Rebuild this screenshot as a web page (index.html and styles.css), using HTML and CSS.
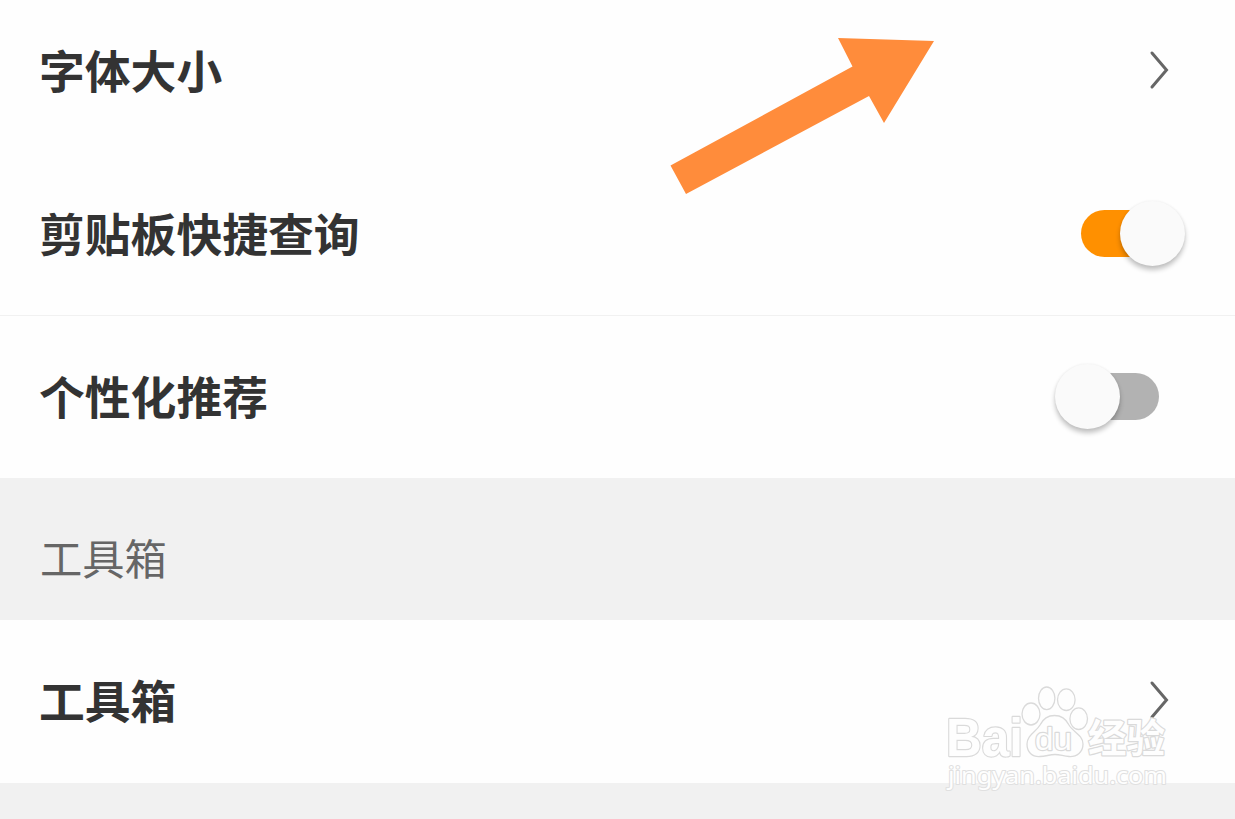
FILE: index.html
```html
<!DOCTYPE html>
<html lang="zh-CN">
    <head>
        <meta charset="utf-8" />
        <title>设置</title>
        <link rel="stylesheet" href="styles.css">
    </head>
    <body>
        <div class="settings">
            <div class="row row_first">
                <span class="label">字体大小</span>
                <svg class="chevron" viewBox="0 0 20 40"><path d="M3 3 L17.5 20 L3 37" /></svg>
            </div>
            <div class="row row_line">
                <span class="label">剪贴板快捷查询</span>
                <div class="toggle on"><div class="thumb"></div></div>
            </div>
            <div class="row">
                <span class="label">个性化推荐</span>
                <div class="toggle"><div class="thumb"></div></div>
            </div>
            <div class="section">工具箱</div>
            <div class="row row_last">
                <span class="label">工具箱</span>
                <svg class="chevron" viewBox="0 0 20 40"><path d="M3 3 L17.5 20 L3 37" /></svg>
            </div>
        </div>

        <svg class="arrow" viewBox="670 37 265 158">
            <path d="M670.5 165.5 L852.5 66.5 L838 38 L934 41 L884 123 L869 96 L686 194 Z" />
        </svg>

        <svg class="watermark" viewBox="940 680 235 115">
            <text class="logo_latin" x="946" y="756" textLength="77" lengthAdjust="spacingAndGlyphs">Bai</text>
            <ellipse cx="1031" cy="714" rx="9" ry="11" />
            <ellipse cx="1046.7" cy="698.3" rx="8.2" ry="11.3" />
            <ellipse cx="1066.3" cy="699.7" rx="8.8" ry="10.8" />
            <ellipse cx="1078.7" cy="718.7" rx="8.8" ry="10.8" />
            <path d="M1054.5 715.5 C1061 715.5 1066 719 1069 725 C1073 732 1083 735 1083 744 C1083 752 1077 757 1069 756.5 C1063 756 1060 754.5 1055 754.5 C1049 754.5 1046 756.5 1040 756.5 C1032 757 1027 752 1027 744 C1027 735 1036 732 1040 725 C1043 719 1048 715.5 1054.5 715.5 Z" />
            <text class="logo_du" x="1035" y="750" textLength="37" lengthAdjust="spacingAndGlyphs">du</text>
            <text class="logo_cn" x="1088" y="752" textLength="77" lengthAdjust="spacingAndGlyphs">经验</text>
            <text class="logo_url" x="948" y="784" textLength="219" lengthAdjust="spacingAndGlyphs">jingyan.baidu.com</text>
        </svg>
    </body>
</html>
```

FILE: styles.css
```css
html, body {
    width: 100%;
    height: 100%;
}

body {
    margin: 0;
    position: relative;
    overflow: hidden;
    background-color: #f1f1f1;
    font-family: "Noto Sans CJK SC", sans-serif;
}

.row {
    display: flex;
    align-items: center;
    justify-content: space-between;
    box-sizing: border-box;
    height: 162px;
    padding: 0px 66px 2px 39px;
    background-color: #fefefe;
}

/* the list is scrolled, the first row is cut at the top */
.row_first {
    height: 153px;
    padding-bottom: 14px;
}

.row_line {
    height: 163px;
    border-bottom: 1px solid #f1f1f1;
}

.row_last {
    height: 163px;
    padding-bottom: 3px;
}

.label {
    margin-bottom: 2px;
    font-size: 45.8px;
    font-weight: bold;
    line-height: 60px;
    color: #333;
}

.section {
    display: flex;
    align-items: center;
    box-sizing: border-box;
    height: 142px;
    padding: 16px 40px 0px;
    font-size: 42.3px;
    line-height: 60px;
    color: #666;
}

.chevron {
    width: 20px;
    height: 40px;
}

.chevron path {
    fill: none;
    stroke: #666;
    stroke-width: 3;
    stroke-linecap: round;
}

.toggle {
    display: flex;
    align-items: center;
    width: 78px;
    height: 47px;
    margin-right: 10px;
    border-radius: 24px;
    background-color: #b2b2b2;
}

.toggle.on {
    justify-content: flex-end;
    background-color: #ff9000;
}

.thumb {
    flex: none;
    width: 65px;
    height: 65px;
    margin: 0px -26px;
    border-radius: 50%;
    background-color: #fafafa;
    box-shadow: 0px 4px 5px rgba(0, 0, 0, 0.24), 0px 0px 3px rgba(0, 0, 0, 0.06);
}

.arrow {
    position: absolute;
    left: 670px;
    top: 37px;
    width: 265px;
    height: 158px;
    fill: #ff8c3b;
}

.watermark {
    position: absolute;
    left: 940px;
    top: 680px;
    width: 235px;
    height: 115px;
    fill: #fefefe;
    stroke: #dadada;
    stroke-width: 1.3;
}

.watermark text {
    paint-order: stroke;
    stroke-width: 2.4;
    stroke-linejoin: round;
}

.logo_latin {
    font: bold 53px "Liberation Sans", sans-serif;
}

.logo_du {
    font: 32px "Liberation Sans", sans-serif;
}

.logo_cn {
    font: bold 39px "Noto Sans CJK SC", sans-serif;
}

.watermark .logo_url {
    font: 24px "Noto Sans", sans-serif;
    stroke: #e0e0e0;
    stroke-width: 2;
}
```
